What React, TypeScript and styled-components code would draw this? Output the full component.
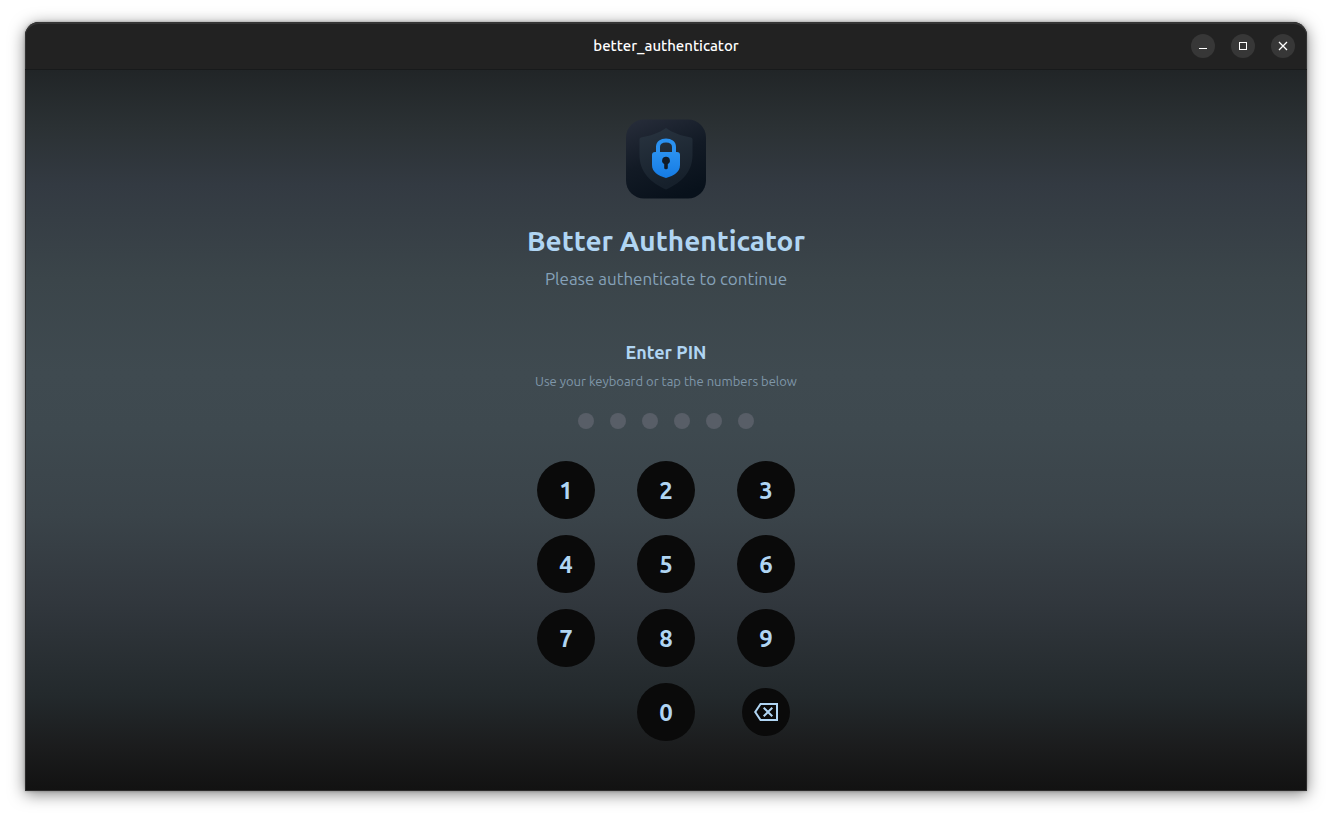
import React, { useState } from "react";
import styled, { createGlobalStyle } from "styled-components";

const GlobalStyle = createGlobalStyle`
  * { box-sizing: border-box; }
  body {
    margin: 0;
    background: #ffffff;
    font-family: Ubuntu, "Noto Sans", "Open Sans", sans-serif;
  }
  button { font-family: inherit; }
`;

const Desktop = styled.div`
  display: flex;
  min-height: 100vh;
  padding: 22px 25px 28px;
`;

const Window = styled.div`
  flex: 1;
  display: flex;
  flex-direction: column;
  border-radius: 14px 14px 0 0;
  overflow: hidden;
  background: #222222;
  box-shadow: 0 3px 16px rgba(0, 0, 0, 0.5), 0 0 3px rgba(0, 0, 0, 0.3);
`;

const TitleBar = styled.header`
  display: grid;
  grid-template-columns: 1fr auto 1fr;
  align-items: center;
  height: 48px;
  padding: 0 12px;
  background: #222222;
  border-bottom: 1px solid #181a1b;
  border-radius: 14px 14px 0 0;
  box-shadow: inset 0 2px 0 #353535, inset 1px 0 0 #333333, inset -1px 0 0 #333333;
`;

const WindowTitle = styled.span`
  grid-column: 2;
  color: #ffffff;
  font-size: 15px;
  font-weight: 500;
  line-height: 20px;
`;

const WindowControls = styled.div`
  display: flex;
  justify-content: flex-end;
  gap: 16px;
`;

const ControlButton = styled.button`
  display: grid;
  place-items: center;
  width: 24px;
  height: 24px;
  padding: 0;
  border: 0;
  border-radius: 50%;
  background: #373737;
  color: #ffffff;
`;

const Screen = styled.main`
  flex: 1;
  display: flex;
  flex-direction: column;
  align-items: center;
  justify-content: center;
  padding: 24px;
  border: 1px solid #2c2b2b;
  border-top: 0;
  background: linear-gradient(
    180deg,
    #212527 0%,
    #2b3134 8%,
    #333a42 16%,
    #3b454a 29%,
    #3f4a50 42%,
    #3e494f 50%,
    #3a4349 62%,
    #31373d 74%,
    #23292c 87%,
    #1b1c1d 94%,
    #121212 100%
  );
`;

const AppTitle = styled.h1`
  margin: 24px 0 8px;
  color: #b0d5f3;
  font-size: 28px;
  font-weight: 700;
  line-height: 36px;
`;

const Subtitle = styled.p`
  margin: 0 0 48px;
  color: #86a2b9;
  font-size: 17px;
  line-height: 24px;
`;

const PinHeading = styled.h2`
  margin: 0 0 8px;
  color: #b0d5f3;
  font-size: 18px;
  font-weight: 700;
  line-height: 26px;
`;

const Hint = styled.p`
  margin: 0 0 24px;
  color: #7f97a9;
  font-size: 13px;
  line-height: 16px;
`;

const Dots = styled.div`
  display: flex;
  gap: 16px;
  margin-bottom: 32px;
`;

const Dot = styled.span<{ $filled: boolean }>`
  width: 16px;
  height: 16px;
  border-radius: 50%;
  background: ${(p) => (p.$filled ? "#b0d5f3" : "#585e67")};
`;

const Keypad = styled.div`
  display: grid;
  grid-template-columns: repeat(3, 58px);
  grid-auto-rows: 58px;
  gap: 16px 42px;
  place-items: center;
`;

const Key = styled.button<{ $size?: number }>`
  display: grid;
  place-items: center;
  width: ${(p) => p.$size ?? 58}px;
  height: ${(p) => p.$size ?? 58}px;
  padding: 0;
  border: 0;
  border-radius: 50%;
  background: #0a0a0a;
  color: #b0d5f3;
  font-size: 24px;
  font-weight: 700;
  line-height: 33px;
  cursor: pointer;
`;

const ZeroKey = styled(Key)`
  grid-column: 2;
`;

function Logo() {
  return (
    <svg width="80" height="80" viewBox="0 0 80 80" aria-hidden="true">
      <defs>
        <linearGradient id="tile" x1="0.2" y1="0" x2="0.6" y2="1">
          <stop offset="0" stopColor="#252b38" />
          <stop offset="0.5" stopColor="#121a25" />
          <stop offset="1" stopColor="#08111b" />
        </linearGradient>
        <linearGradient id="shield" x1="0" y1="0" x2="0.3" y2="1">
          <stop offset="0" stopColor="#293440" />
          <stop offset="1" stopColor="#16202b" />
        </linearGradient>
        <linearGradient id="lock" x1="0" y1="0" x2="0" y2="1">
          <stop offset="0" stopColor="#2a91f0" />
          <stop offset="1" stopColor="#157be4" />
        </linearGradient>
      </defs>
      <rect y="0.5" width="80" height="79" rx="18" fill="url(#tile)" />
      <path
        d="M40 9C47 14 56 17 65 18.500Q66.500 18.800 66.500 20.500V36C66.500 53 55 64 40 70.500C25 64 13.500 53 13.500 36V20.500Q13.500 18.800 15 18.500C24 17 33 14 40 9Z"
        fill="url(#shield)"
      />
      <path
        d="M32 35V28C32 23.500 35.500 21.500 40 21.500S48 23.500 48 28V35"
        fill="none"
        stroke="#2a91f0"
        strokeWidth="4"
      />
      <path
        d="M29 33H51Q54 33 54 36V46C54 53 48 56.500 40 59C32 56.500 26 53 26 46V36Q26 33 29 33Z"
        fill="url(#lock)"
      />
      <path
        d="M40 37.800A3.800 3.800 0 0 0 38.200 45V49Q38.200 50.300 40 50.300T41.800 49V45A3.800 3.800 0 0 0 40 37.800Z"
        fill="#111b27"
      />
    </svg>
  );
}

function BackspaceIcon() {
  return (
    <svg width="24" height="24" viewBox="0 0 24 24" fill="currentColor" aria-hidden="true">
      <path d="M24 3H6l-6 9 6 9h18V3zm-2 16H7.070L2.400 12l4.660-7H22v14zm-11.590-2L14 13.410 17.590 17 19 15.590 15.410 12 19 8.410 17.590 7 14 10.590 10.410 7 9 8.410 12.590 12 9 15.590z" />
    </svg>
  );
}

const PIN_LENGTH = 6;
const digits = ["1", "2", "3", "4", "5", "6", "7", "8", "9"];

export default function App() {
  const [pin, setPin] = useState("");
  const press = (digit: string) =>
    setPin((current) => (current.length < PIN_LENGTH ? current + digit : current));

  return (
    <>
      <GlobalStyle />
      <Desktop>
        <Window>
          <TitleBar>
            <WindowTitle>better_authenticator</WindowTitle>
            <WindowControls>
              <ControlButton aria-label="Minimize">
                <svg width="10" height="10" viewBox="0 0 10 10">
                  <path d="M1 7.500h8" stroke="currentColor" />
                </svg>
              </ControlButton>
              <ControlButton aria-label="Maximize">
                <svg width="10" height="10" viewBox="0 0 10 10">
                  <rect x="1.500" y="1.500" width="7" height="7" fill="none" stroke="currentColor" />
                </svg>
              </ControlButton>
              <ControlButton aria-label="Close">
                <svg width="10" height="10" viewBox="0 0 10 10">
                  <path d="M1 1l8 8M9 1l-8 8" stroke="currentColor" strokeWidth="1.300" />
                </svg>
              </ControlButton>
            </WindowControls>
          </TitleBar>
          <Screen>
            <Logo />
            <AppTitle>Better Authenticator</AppTitle>
            <Subtitle>Please authenticate to continue</Subtitle>
            <PinHeading>Enter PIN</PinHeading>
            <Hint>Use your keyboard or tap the numbers below</Hint>
            <Dots role="status" aria-label={`${pin.length} of ${PIN_LENGTH} digits entered`}>
              {Array.from({ length: PIN_LENGTH }, (_, i) => (
                <Dot key={i} $filled={i < pin.length} />
              ))}
            </Dots>
            <Keypad>
              {digits.map((digit) => (
                <Key key={digit} onClick={() => press(digit)}>
                  {digit}
                </Key>
              ))}
              <ZeroKey onClick={() => press("0")}>0</ZeroKey>
              <Key
                $size={48}
                aria-label="Backspace"
                onClick={() => setPin((current) => current.slice(0, -1))}
              >
                <BackspaceIcon />
              </Key>
            </Keypad>
          </Screen>
        </Window>
      </Desktop>
    </>
  );
}
